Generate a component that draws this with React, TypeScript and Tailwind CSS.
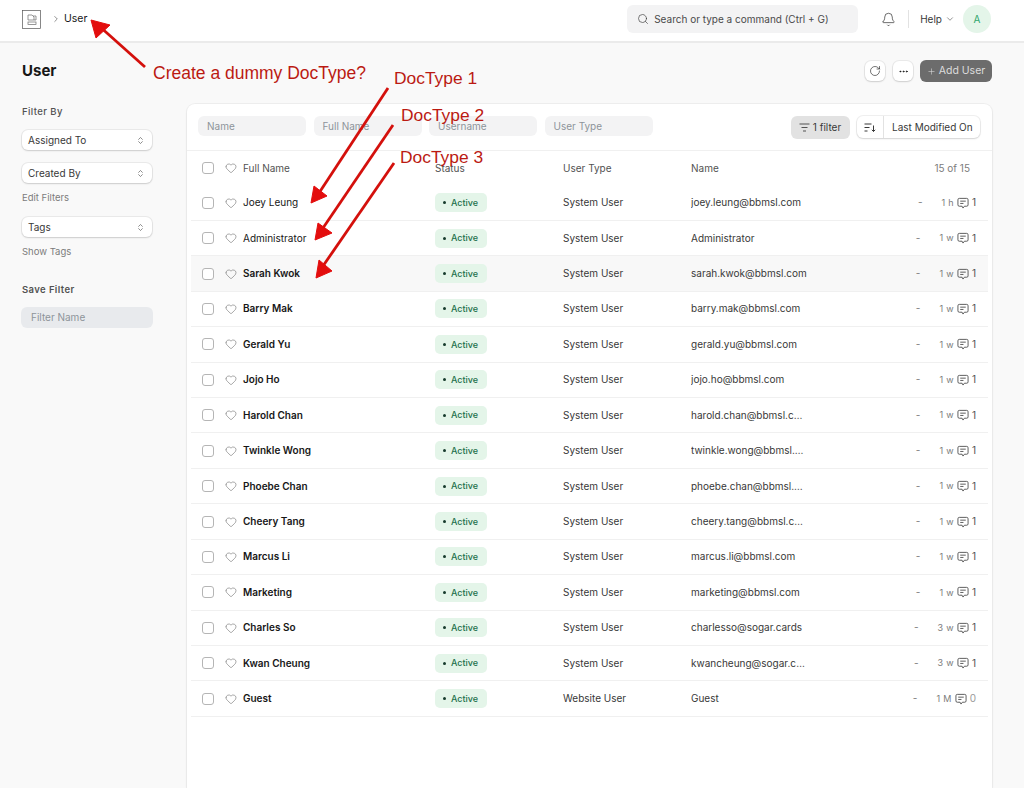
import React from "react";
import { Search, Bell, ChevronDown, ChevronRight, RotateCw, MoreHorizontal, Plus, Heart, ChevronsUpDown } from "lucide-react";

const rows: [string, string, string, string, boolean][] = [
  ["Joey Leung", "System User", "joey.leung@bbmsl.com", "1 h", false],
  ["Administrator", "System User", "Administrator", "1 w", false],
  ["Sarah Kwok", "System User", "sarah.kwok@bbmsl.com", "1 w", true],
  ["Barry Mak", "System User", "barry.mak@bbmsl.com", "1 w", true],
  ["Gerald Yu", "System User", "gerald.yu@bbmsl.com", "1 w", true],
  ["Jojo Ho", "System User", "jojo.ho@bbmsl.com", "1 w", true],
  ["Harold Chan", "System User", "harold.chan@bbmsl.com", "1 w", true],
  ["Twinkle Wong", "System User", "twinkle.wong@bbmsl.com", "1 w", true],
  ["Phoebe Chan", "System User", "phoebe.chan@bbmsl.com", "1 w", true],
  ["Cheery Tang", "System User", "cheery.tang@bbmsl.com", "1 w", true],
  ["Marcus Li", "System User", "marcus.li@bbmsl.com", "1 w", true],
  ["Marketing", "System User", "marketing@bbmsl.com", "1 w", true],
  ["Charles So", "System User", "charlesso@sogar.cards", "3 w", true],
  ["Kwan Cheung", "System User", "kwancheung@sogar.cards", "3 w", true],
  ["Guest", "Website User", "Guest", "1 M", true],
];

function Comment() {
  return (
    <svg width="12" height="12" viewBox="0 0 13 13" fill="none" stroke="#525252" strokeWidth="1" className="shrink-0">
      <path d="M2.5 1.5h8a1.5 1.5 0 0 1 1.5 1.5v5.5a1.5 1.5 0 0 1-1.5 1.5H8L6.5 12 5.5 10h-3A1.5 1.5 0 0 1 1 8.5V3a1.5 1.5 0 0 1 1.5-1.5z" />
      <path d="M3.5 4.5h6M3.5 7h3.5" />
    </svg>
  );
}

function Check() {
  return <span className="block w-3 h-3 shrink-0 rounded-[3px] border border-[#b5b5b5] bg-white" />;
}

function SideSelect({ label }: { label: string }) {
  return (
    <div className="flex items-center justify-between h-5 w-[130px] ml-px px-[6px] rounded-[6px] bg-white text-[10px] text-[#383838] shadow-[0_0_0_1px_rgba(0,0,0,0.06),0_1px_2px_rgba(0,0,0,0.13)]">
      <span>{label}</span>
      <ChevronsUpDown size={9} strokeWidth={1.5} className="text-[#383838] mr-[1px]" />
    </div>
  );
}

function FilterInput({ label }: { label: string }) {
  return (
    <div className="flex items-center w-[108px] h-5 pl-[9px] rounded-[6px] bg-[#f3f3f4] text-[10px] text-[#8d949a]">{label}</div>
  );
}

function Row({ r, i }: { r: (typeof rows)[number]; i: number }) {
  const [name, type, id, time, bold] = r;
  return (
    <div className={`flex items-center h-[35.43px] pl-[11px] pr-[12px] text-[10px] border-b border-[#f0f0f0] ${i === 2 ? "bg-[#f8f8f8]" : ""}`}>
      <Check />
      <Heart size={12} strokeWidth={1} className="ml-[11px] shrink-0 text-[#525252]" />
      <span className={`ml-[6px] w-[192px] shrink-0 text-[#171717] ${bold ? "font-semibold" : "font-normal"}`}>{name}</span>
      <span className="w-[128px] shrink-0">
        <span className="inline-flex items-center h-[19px] w-[52px] pl-[8px] rounded-[5px] bg-[#e4f5e9] text-[#23704c] text-[9px] font-medium">
          <span className="w-[3px] h-[3px] rounded-full bg-[#173b2c] mr-[5px]" />
          Active
        </span>
      </span>
      <span className="w-[128px] shrink-0 text-[#383838]">{type}</span>
      <span className="w-[116px] shrink-0 truncate text-[#383838]">{id}</span>
      <span className="flex-1 flex items-center justify-end text-[#7c7c7c]">
        <span className="text-[10px] mr-[19px]">-</span>
        <span className="text-[9px] mr-[3px] tracking-[0.3px] whitespace-nowrap">{time}</span>
        <Comment />
        <span className={`ml-[3px] text-[10px] ${i === 14 ? "text-[#999]" : "text-[#525252]"}`}>{i === 14 ? "0" : "1"}</span>
      </span>
    </div>
  );
}

function Annotations() {
  const arrows = [
    { l: "145,67 98,25", h: "91,20 110,25 96,38" },
    { l: "388,88 319,193", h: "311,203 314,186 327,196" },
    { l: "393,125 323,228", h: "315,240 318,223 332,233" },
    { l: "394,163 323,266", h: "316,278 319,260 332,271" },
  ];
  return (
    <div className="absolute inset-0 pointer-events-none font-['Liberation_Sans',Arial,sans-serif] text-[#bb1a12]">
      <svg width="1024" height="788" className="absolute inset-0">
        {arrows.map((a) => (
          <g key={a.l}>
            <polyline points={a.l} stroke="#d4100c" strokeWidth="2.8" fill="none" />
            <polygon points={a.h} fill="#e30d0d" stroke="#e30d0d" strokeWidth="1" />
          </g>
        ))}
      </svg>
      <span className="absolute left-[153px] top-[62px] text-[17.5px] leading-[22px] whitespace-nowrap">Create a dummy DocType?</span>
      <span className="absolute left-[394px] top-[67px] text-[17.4px] leading-[22px]">DocType 1</span>
      <span className="absolute left-[401px] top-[104px] text-[17.4px] leading-[22px]">DocType 2</span>
      <span className="absolute left-[400px] top-[146px] text-[17.4px] leading-[22px]">DocType 3</span>
    </div>
  );
}

export default function App() {
  return (
    <div className="relative h-[788px] w-[1024px] overflow-hidden bg-[#f9f9f9] font-['Inter',sans-serif] text-[#171717] flex flex-col">
      <header className="h-[43px] shrink-0 bg-white border-b-2 border-[#ebebeb] flex items-center pl-[22px] pr-[33px] pb-[3px]">
        <svg width="19" height="19" viewBox="0 0 19 19" fill="none" stroke="#6b6b6b" strokeWidth="0.7" className="shrink-0 mt-px">
          <rect x="0.5" y="0.5" width="18" height="18" stroke="#555" />
          <path d="M6 5h4l2 2v3H6zM11 6h3v4h-2" />
          <rect x="6" y="12" width="8" height="2.5" />
        </svg>
        <ChevronRight size={10} strokeWidth={1.2} className="ml-[10px] text-[#222]" />
        <span className="ml-[3px] text-[10.5px] text-[#171717]">User</span>
        <div className="ml-auto flex items-center h-7 w-[231px] rounded-[6px] bg-[#f3f3f4] pl-[10px] text-[10px] text-[#4a4a4a]">
          <Search size={12} strokeWidth={1.3} className="mr-[5px] text-[#383838]" />
          Search or type a command (Ctrl + G)
        </div>
        <Bell size={15} strokeWidth={1} className="ml-[23px] text-[#171717]" />
        <span className="ml-[12px] w-px h-[18px] bg-[#e2e2e2]" />
        <span className="ml-[11px] text-[10px] text-[#383838]">Help</span>
        <ChevronDown size={10} strokeWidth={1.3} className="ml-[3px] text-[#383838]" />
        <span className="ml-[8px] w-7 h-7 rounded-full bg-[#e4f5e9] flex items-center justify-center text-[10px] text-[#30a66d]">A</span>
      </header>

      <div className="flex-1 flex min-h-0">
        <aside className="w-[187px] shrink-0 pl-[21px] pt-[17px]">
          <h1 className="text-[15px] leading-[22px] font-bold text-[#171717] pl-px">User</h1>
          <p className="mt-[24px] text-[9.5px] leading-3 font-medium tracking-[0.4px] text-[#525252] pl-px">Filter By</p>
          <div className="mt-[12px]"><SideSelect label="Assigned To" /></div>
          <div className="mt-[13px]"><SideSelect label="Created By" /></div>
          <p className="mt-[9px] text-[9.5px] leading-3 text-[#7c7c7c] pl-px">Edit Filters</p>
          <div className="mt-[13px]"><SideSelect label="Tags" /></div>
          <p className="mt-[9px] text-[9.5px] leading-3 text-[#7c7c7c] pl-px">Show Tags</p>
          <p className="mt-[26px] text-[9.5px] leading-3 font-semibold tracking-[0.4px] text-[#525252] pl-px">Save Filter</p>
          <div className="mt-[11px] flex items-center w-[132px] h-[21px] pl-[10px] rounded-[6px] bg-[#e8eaed] text-[10px] text-[#8d949a]">Filter Name</div>
        </aside>

        <main className="w-[805px] shrink-0 flex flex-col">
          <div className="h-[61px] shrink-0 flex items-start justify-end pt-[17px]">
            <button className="mt-px w-5 h-5 flex items-center justify-center rounded-[6px] bg-white shadow-[0_0_0_1px_rgba(0,0,0,0.06),0_1px_2px_rgba(0,0,0,0.12)]">
              <RotateCw size={12} strokeWidth={1.2} className="text-[#171717]" />
            </button>
            <button className="mt-px ml-2 w-5 h-5 flex items-center justify-center rounded-[6px] bg-white shadow-[0_0_0_1px_rgba(0,0,0,0.06),0_1px_2px_rgba(0,0,0,0.12)]">
              <MoreHorizontal size={11} strokeWidth={2} className="text-[#171717]" />
            </button>
            <button className="ml-[7px] w-[72px] h-[22px] flex items-center justify-center rounded-[6px] bg-[#6c6c6c] text-[10.5px] text-[#dcdcdc]">
              <Plus size={9} strokeWidth={1.5} className="mr-[3px]" />
              Add User
            </button>
          </div>
          <section className="flex-1 bg-white rounded-t-[8px] shadow-[0_0_0_1px_rgba(0,0,0,0.04),0_1px_3px_rgba(0,0,0,0.06)] flex flex-col">
            <div className="h-[47px] shrink-0 flex items-start pt-[12px] pl-[11px] pr-[12px] gap-[7.5px] border-b border-[#f0f0f0]">
              <FilterInput label="Name" />
              <FilterInput label="Full Name" />
              <FilterInput label="Username" />
              <FilterInput label="User Type" />
              <div className="ml-auto flex items-center justify-center w-[59px] h-[23px] rounded-[6px] bg-[#e2e2e2] text-[10px] text-[#383838]">
                <svg width="11" height="9" viewBox="0 0 11 9" fill="none" stroke="#525252" strokeWidth="1" className="mr-[3px]">
                  <path d="M0.5 1h10M2.5 4.5h6M4 8h3" />
                </svg>
                1 filter
              </div>
              <div className="flex items-center h-[22px] w-[123px] rounded-[6px] bg-white text-[10px] text-[#383838] shadow-[0_0_0_1px_rgba(0,0,0,0.06),0_1px_2px_rgba(0,0,0,0.12)]">
                <span className="w-[27px] h-full flex items-center justify-center border-r border-[#e2e2e2]">
                  <svg width="12" height="9" viewBox="0 0 12 9" fill="none" stroke="#383838" strokeWidth="1">
                    <path d="M0.5 1h7M0.5 4.5h5M0.5 8h3M9.5 2.5V8.5M7.8 6.8l1.7 1.7 1.7-1.7" />
                  </svg>
                </span>
                <span className="pl-2 whitespace-nowrap">Last Modified On</span>
              </div>
            </div>
            <div className="flex items-center h-[34.5px] shrink-0 pl-[15px] pr-[22px] text-[10px] text-[#525252]">
              <Check />
              <Heart size={12} strokeWidth={1} className="ml-[11px] shrink-0" />
              <span className="ml-[6px] w-[192px] shrink-0">Full Name</span>
              <span className="w-[128px] shrink-0">Status</span>
              <span className="w-[128px] shrink-0">User Type</span>
              <span className="w-[116px] shrink-0">Name</span>
              <span className="flex-1 text-right text-[#7c7c7c]">15 of 15</span>
            </div>
            <div className="mx-1">
              {rows.map((r, i) => (
                <Row key={r[0]} r={r} i={i} />
              ))}
            </div>
          </section>
        </main>
      </div>
      <Annotations />
    </div>
  );
}
